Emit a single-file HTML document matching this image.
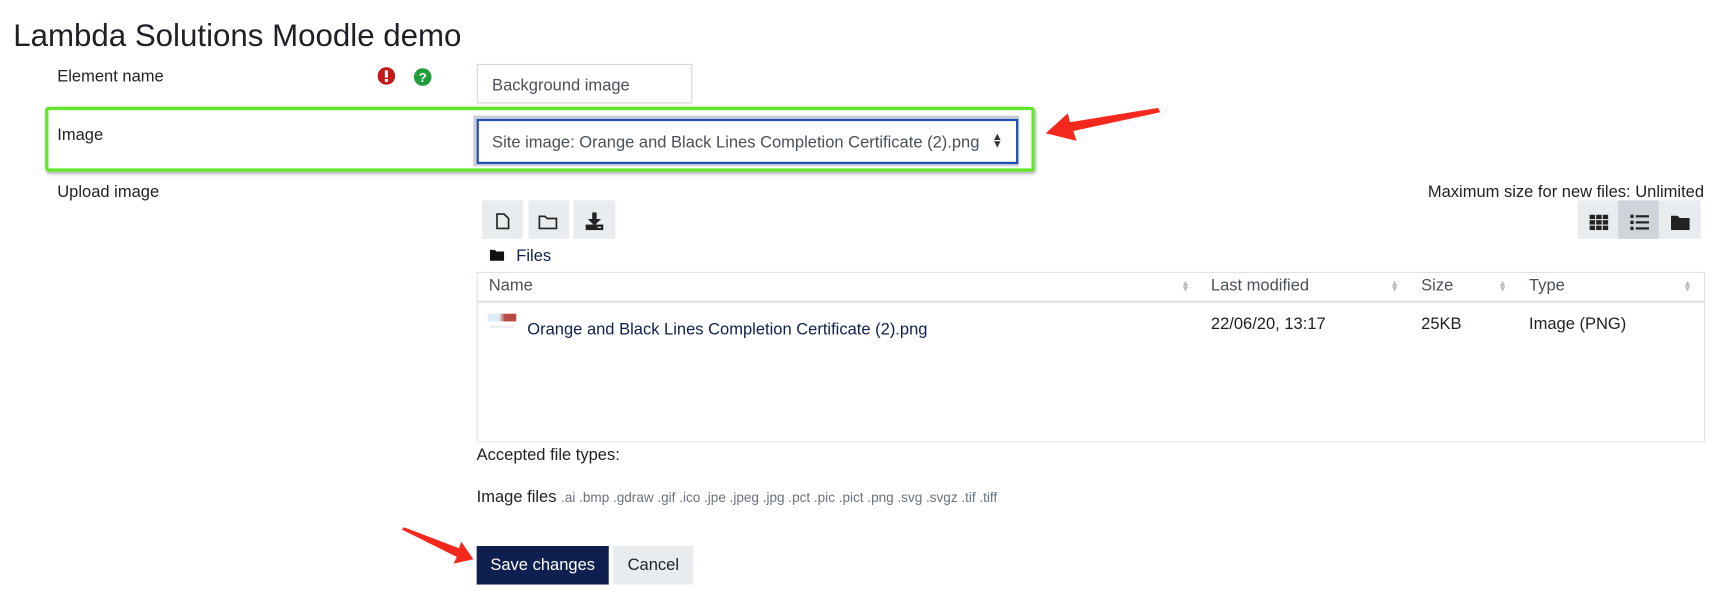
<!DOCTYPE html>
<html><head><meta charset="utf-8"><style>
html,body{margin:0;padding:0;background:#fff;overflow:hidden;width:1726px;height:599px}
#w{position:absolute;left:0;top:0;width:1568px;height:544px;transform:scale(1.1008);transform-origin:0 0;font-family:"Liberation Sans",sans-serif;color:#1d2125;font-size:15px}
.a{position:absolute;white-space:nowrap}
.btn{position:absolute;background:#e9ecef;height:35px}
.lnk{color:#0f1f4f}
.sort{position:absolute;color:#bbb;font-size:8px;line-height:5px}
</style></head><body><div id="w">
<div class="a" style="left:12px;top:17px;font-size:28.4px;color:#1d2125">Lambda Solutions Moodle demo</div>
<div class="a" style="left:52px;top:61px">Element name</div>
<svg class="a" style="left:343px;top:61px" width="16" height="16"><circle cx="8" cy="8" r="8" fill="#c31919"/><rect x="6.6" y="3" width="2.8" height="6.5" fill="#fff"/><rect x="6.6" y="10.8" width="2.8" height="2.6" fill="#fff"/></svg>
<svg class="a" style="left:376px;top:62px" width="16" height="16"><circle cx="8" cy="8" r="8" fill="#1f9d3a"/><text x="8" y="12.5" font-size="12" font-weight="bold" fill="#fff" text-anchor="middle" font-family="Liberation Sans">?</text></svg>
<div class="a" style="left:433px;top:58px;width:194px;height:34px;border:1px solid #ced4da"></div>
<div class="a" style="left:447px;top:69px;color:#495057">Background image</div>
<div class="a" style="left:41px;top:97px;width:893px;height:53px;border:3px solid #62e62c;border-radius:3px;box-shadow:1px 2px 3px rgba(0,0,0,.3)"></div>
<div class="a" style="left:52px;top:114px">Image</div>
<div class="a" style="left:430px;top:105px;width:496px;height:46px;background:#c9cdd8"></div>
<div class="a" style="left:433px;top:108px;width:488px;height:37px;background:#fff;border:2px solid #1d4fb5"></div>
<div class="a" style="left:447px;top:121px;color:#495057">Site image: Orange and Black Lines Completion Certificate (2).png</div>
<div class="a" style="left:901px;top:121px;font-size:10px;line-height:7px;color:#333">▲<br>▼</div>
<svg class="a" style="left:945px;top:95px" width="115" height="40"><polygon points="107,3 109,7 30,24 33,33 5,26 25,8 27,16" fill="#f4281c"/></svg>
<div class="a" style="left:52px;top:166px">Upload image</div>
<div class="a" style="right:20px;top:166px">Maximum size for new files: Unlimited</div>
<div class="btn" style="left:438px;top:182px;width:37px"></div>
<div class="btn" style="left:480px;top:182px;width:37px"></div>
<div class="btn" style="left:521px;top:182px;width:38px"></div>
<svg class="a" style="left:450px;top:193px" width="14" height="16"><path d="M1.5 1.5h6.5l4 4v9h-10.5z" fill="none" stroke="#222" stroke-width="1.5"/></svg>
<svg class="a" style="left:489px;top:195px" width="18" height="14"><path d="M1 1.5h5l2 2h8.5v9h-15.5z" fill="none" stroke="#222" stroke-width="1.5"/></svg>
<svg class="a" style="left:531px;top:192px" width="18" height="18"><rect x="7" y="1" width="4" height="7" fill="#222"/><polygon points="3,7 15,7 9,13" fill="#222"/><rect x="1" y="12" width="16" height="5" fill="#222"/><rect x="12" y="14" width="3" height="1" fill="#fff"/></svg>
<div class="btn" style="left:1433px;top:182px;width:37px"></div>
<div class="btn" style="left:1470px;top:182px;width:37px;background:#ced4da"></div>
<div class="btn" style="left:1507px;top:182px;width:38px"></div>
<svg class="a" style="left:1444px;top:195px" width="17" height="14"><g fill="#222"><rect x="0" y="0" width="5" height="4"/><rect x="6" y="0" width="5" height="4"/><rect x="12" y="0" width="5" height="4"/><rect x="0" y="5" width="5" height="4"/><rect x="6" y="5" width="5" height="4"/><rect x="12" y="5" width="5" height="4"/><rect x="0" y="10" width="5" height="4"/><rect x="6" y="10" width="5" height="4"/><rect x="12" y="10" width="5" height="4"/></g></svg>
<svg class="a" style="left:1481px;top:195px" width="17" height="14"><g fill="#222"><rect x="0" y="0" width="3" height="3"/><rect x="5" y="0.5" width="12" height="2"/><rect x="0" y="5.5" width="3" height="3"/><rect x="5" y="6" width="12" height="2"/><rect x="0" y="11" width="3" height="3"/><rect x="5" y="11.5" width="12" height="2"/></g></svg>
<svg class="a" style="left:1518px;top:195px" width="17" height="14"><path d="M0 1h6l2 2h9v11h-17z" fill="#222"/></svg>
<svg class="a" style="left:445px;top:226px" width="13" height="11"><path d="M0 1h4.5l1.5 1.5h7v8.5h-13z" fill="#111"/></svg>
<div class="a lnk" style="left:469px;top:224px;font-size:15px">Files</div>
<div class="a" style="left:433px;top:247px;width:1114px;height:153px;border:1px solid #dee2e6"></div>
<div class="a" style="left:434px;top:273px;width:1114px;height:2px;background:#dee2e6"></div>
<div class="a" style="left:444px;top:251px;color:#495057">Name</div>
<div class="a" style="left:1100px;top:251px;color:#495057">Last modified</div>
<div class="a" style="left:1291px;top:251px;color:#495057">Size</div>
<div class="a" style="left:1389px;top:251px;color:#495057">Type</div>
<div class="sort" style="left:1073px;top:255px">▲<br>▼</div>
<div class="sort" style="left:1263px;top:255px">▲<br>▼</div>
<div class="sort" style="left:1361px;top:255px">▲<br>▼</div>
<div class="sort" style="left:1529px;top:255px">▲<br>▼</div>
<div class="a" style="left:443px;top:285px;width:26px;height:7px;background:linear-gradient(90deg,#dfeef5 40%,#b94a45 60%)"></div>
<div class="a" style="left:445px;top:296px;width:22px;height:2px;background:#eee"></div>
<div class="a lnk" style="left:479px;top:291px">Orange and Black Lines Completion Certificate (2).png</div>
<div class="a" style="left:1100px;top:286px">22/06/20, 13:17</div>
<div class="a" style="left:1291px;top:286px">25KB</div>
<div class="a" style="left:1389px;top:286px">Image (PNG)</div>
<div class="a" style="left:433px;top:405px">Accepted file types:</div>
<div class="a" style="left:433px;top:443px">Image files <span style="font-size:12.3px;color:#6a737b">.ai .bmp .gdraw .gif .ico .jpe .jpeg .jpg .pct .pic .pict .png .svg .svgz .tif .tiff</span></div>
<div class="a" style="left:433px;top:496px;width:120px;height:35px;background:#0f1f4f;color:#fff;text-align:center;line-height:35px">Save changes</div>
<div class="a" style="left:557px;top:496px;width:73px;height:35px;background:#e9ecef;text-align:center;line-height:35px">Cancel</div>
<svg class="a" style="left:362px;top:478px" width="70" height="36"><polygon points="3,3 5,1 55,20 57,14 68,30 50,34 53,28" fill="#f4281c"/></svg>
</div></body></html>
